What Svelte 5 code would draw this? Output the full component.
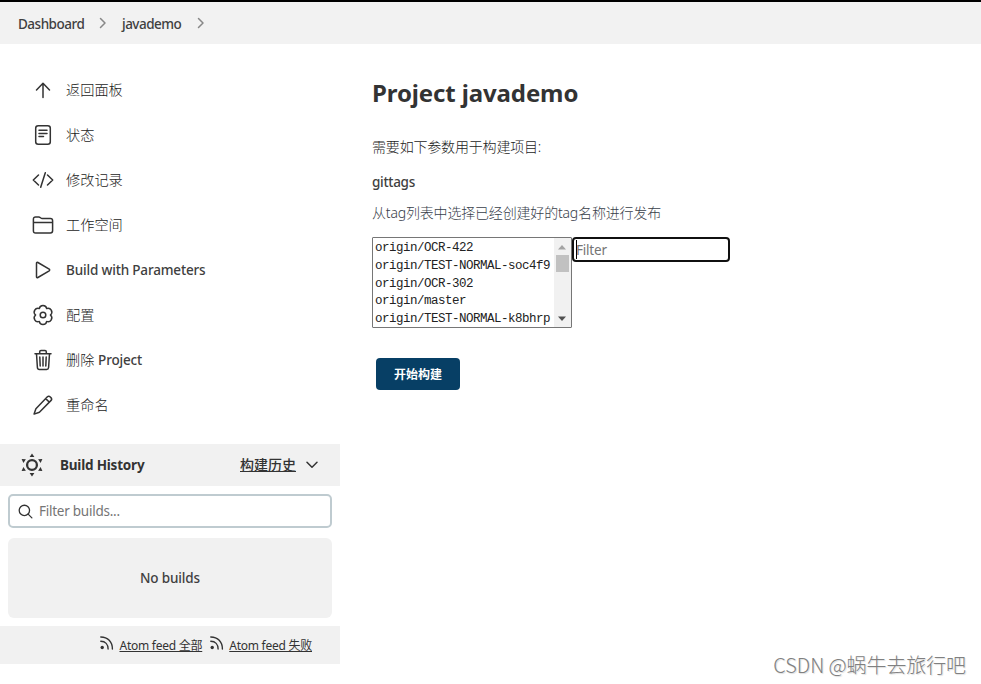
<script>
  const tasks = [
    { label: "返回面板", icon: "up" },
    { label: "状态", icon: "status" },
    { label: "修改记录", icon: "code" },
    { label: "工作空间", icon: "folder" },
    { latin: "Build with Parameters", icon: "play" },
    { label: "配置", icon: "gear" },
    { label: "删除 ", latin: "Project", icon: "trash" },
    { label: "重命名", icon: "pencil" },
  ];

  const tags = [
    "origin/OCR-422",
    "origin/TEST-NORMAL-soc4f9",
    "origin/OCR-302",
    "origin/master",
    "origin/TEST-NORMAL-k8bhrp",
  ];

  const feeds = ["全部", "失败"];
</script>

<div class="page">
  <nav class="breadcrumbs">
    <span class="crumb">Dashboard</span>
    <svg class="chevron" viewBox="0 0 8 12"><path d="M1.5 1.5 6 6l-4.5 4.5" /></svg>
    <span class="crumb second">javademo</span>
    <svg class="chevron" viewBox="0 0 8 12"><path d="M1.5 1.5 6 6l-4.5 4.5" /></svg>
  </nav>

  <div class="body">
    <aside>
      <div class="tasks">
        {#each tasks as task}
          <div class="task">
            <svg class="icon" viewBox="0 0 24 24">
              {#if task.icon === "up"}
                <path d="M12 19.500V5.500M5.500 12 12 5.200l6.500 6.800" />
              {:else if task.icon === "status"}
                <rect x="4.700" y="2.700" width="14.600" height="18.600" rx="2.500" />
                <path d="M8 7.200h8M8 10.400h8M8 13.600h4.500" />
              {:else if task.icon === "code"}
                <path d="M7.500 7 2.300 12l5.200 5M16.500 7l5.200 5-5.200 5M14.300 4.800 9.700 19.200" />
              {:else if task.icon === "folder"}
                <path
                  d="M2.400 9.500V6.200c0-1.400.8-2.200 2.200-2.200h3.200c1.500 0 1.900 1.500 3.300 1.500h8.300c1.400 0 2.200.8 2.200 2.200v10.100c0 1.400-.8 2.200-2.200 2.200H4.600c-1.400 0-2.200-.8-2.200-2.200V9.500h19.200"
                />
              {:else if task.icon === "play"}
                <path d="M5.500 5.300v13.400c0 .9.700 1.200 1.400.8l11.300-6.700c.6-.4.600-1.200 0-1.600L6.900 4.500c-.7-.4-1.400-.1-1.400.8Z" />
              {:else if task.icon === "gear"}
                <circle cx="12" cy="12" r="2.800" />
                <path
                  d="M8.300 5.600a3.750 3.750 0 0 1 7.400 0 3.750 3.750 0 0 1 3.700 6.400 3.750 3.750 0 0 1-3.700 6.400 3.750 3.750 0 0 1-7.400 0A3.750 3.750 0 0 1 4.600 12a3.750 3.750 0 0 1 3.700-6.400Z"
                />
              {:else if task.icon === "trash"}
                <path d="M4 5.700h16M8.700 5.500V3.800c0-.8.5-1.300 1.300-1.300h4c.8 0 1.300.5 1.300 1.300v1.700" />
                <path d="m5.500 5.800.9 13.700c.1 1.200.8 1.900 2 1.900h7.200c1.200 0 1.900-.7 2-1.900l.9-13.700M8.800 9l.4 9M12 9v9M15.200 9l-.4 9" />
              {:else}
                <path d="M16.400 3.800c1.800-1.800 5.500 1.600 3.700 3.600L8.400 19.200l-5.300 1.900 1.800-5.400L16.400 3.800ZM14.700 5.600l3.700 3.700" />
              {/if}
            </svg>
            <span>{task.label ?? ""}<span class="latin">{task.latin ?? ""}</span></span>
          </div>
        {/each}
      </div>

      <div class="history">
        <svg class="weather" viewBox="0 0 24 24">
          <circle cx="12" cy="12" r="4.900" />
          <path
            d="m12 .4 2.400 3.600H9.600ZM12 23.600 9.600 20h4.800ZM1.600 6l4.300.3-2.500 3.700ZM22.400 6l-4.300.3 2.500 3.700ZM1.600 18l4.300-.3-2.500-3.700ZM22.400 18l-4.300-.3 2.500-3.700Z"
          />
        </svg>
        <strong>Build History</strong>
        <span class="trend">构建历史</span>
        <svg class="down" viewBox="0 0 12 8"><path d="m1 1.300 5 5 5-5" /></svg>
      </div>

      <div class="search">
        <svg viewBox="0 0 16 16"><circle cx="6.800" cy="6.800" r="5.500" /><path d="m10.800 10.800 4 4" /></svg>
        <span>Filter builds...</span>
      </div>

      <div class="empty">No builds</div>

      <div class="feeds">
        {#each feeds as feed}
          <div class="feed">
            <svg viewBox="0 0 14 14">
              <circle cx="2.200" cy="11.500" r="1.700" />
              <path d="M.8 5.300c4.500 0 7.300 3 7.300 7.700M.8 1c7 0 11.600 4.800 11.600 12" />
            </svg>
            <span>Atom feed {feed}</span>
          </div>
        {/each}
      </div>
    </aside>

    <main>
      <h1>Project javademo</h1>
      <p class="intro">需要如下参数用于构建项目:</p>
      <p class="name">gittags</p>
      <p class="description">从tag列表中选择已经创建好的tag名称进行发布</p>
      <div class="parameter">
        <div class="list">
          <div class="options">
            {#each tags as tag}
              <div class="option">{tag}</div>
            {/each}
          </div>
          <div class="scrollbar">
            <svg viewBox="0 0 16 17"><path fill="#a3a3a3" d="m8 7 4 4.500H4Z" /></svg>
            <div class="thumb"></div>
            <svg class="bottom" viewBox="0 0 16 17"><path fill="#505050" d="m8 11 4-4.500H4Z" /></svg>
          </div>
        </div>
        <div class="filter"><i></i><span>Filter</span></div>
      </div>
      <button>开始构建</button>
    </main>
  </div>

  <div class="watermark">CSDN @蜗牛去旅行吧</div>
</div>

<style>
  :global(body) {
    margin: 0;
    background: #fff;
  }

  .page {
    position: relative;
    box-sizing: border-box;
    width: 981px;
    height: 684px;
    overflow: hidden;
    border-top: 2px solid #000;
    color: #333;
    font: 500 13.5px/20px "Noto Sans", "Noto Sans CJK SC", sans-serif;
    white-space: nowrap;
  }

  svg {
    display: block;
    flex: none;
    fill: none;
    stroke: #333;
    stroke-width: 1.5;
    stroke-linecap: round;
    stroke-linejoin: round;
  }

  .breadcrumbs {
    display: flex;
    align-items: center;
    height: 42px;
    padding-left: 18px;
    background: #f2f2f2;
  }

  .crumb {
    width: 67px;
    padding-top: 2px;
    color: #404040;
    letter-spacing: -0.5px;
  }

  .second {
    width: 61px;
  }

  .chevron {
    width: 8px;
    height: 12px;
    margin: 0 15px 0 14px;
    stroke: #888;
  }

  .body {
    display: flex;
  }

  aside {
    width: 340px;
  }

  .tasks {
    padding: 23px 0 17px 31px;
  }

  .task {
    display: flex;
    align-items: center;
    gap: 11px;
    height: 45px;
    color: #1c1c1c;
    font-weight: 300;
    font-size: 14.2px;
  }

  .latin {
    color: #404040;
    font-weight: 500;
    font-size: 13.5px;
    letter-spacing: -0.17px;
  }

  .icon {
    width: 24px;
    height: 24px;
  }

  .history {
    display: flex;
    align-items: center;
    box-sizing: border-box;
    height: 42px;
    padding: 0 22px 1px 20px;
    background: #f1f1f1;
  }

  .weather {
    width: 24px;
    height: 24px;
    margin-right: 16px;
    stroke-width: 2.3;
  }

  .weather path {
    fill: #333;
    stroke: none;
  }

  strong {
    flex: 1;
    font-weight: 700;
    letter-spacing: -0.2px;
  }

  .trend {
    font-size: 14px;
    text-decoration: underline;
  }

  .down {
    width: 12px;
    height: 8px;
    margin-left: 10px;
  }

  .search {
    display: flex;
    align-items: center;
    box-sizing: border-box;
    height: 34px;
    margin: 8px 8px 10px;
    padding-left: 8px;
    border: 2px solid #bfcbd0;
    border-radius: 5px;
    color: #757575;
    font-weight: 400;
    letter-spacing: -0.25px;
  }

  .search svg {
    width: 15px;
    height: 15px;
    margin-right: 6px;
    stroke-width: 1.4;
  }

  .empty {
    display: flex;
    align-items: center;
    justify-content: center;
    height: 80px;
    margin: 0 8px 8px;
    border-radius: 6px;
    background: #f1f1f1;
    color: #404040;
    letter-spacing: -0.15px;
  }

  .feeds {
    display: flex;
    align-items: center;
    justify-content: flex-end;
    gap: 8px;
    box-sizing: border-box;
    height: 38px;
    padding: 1px 28px 0 0;
    background: #f1f1f1;
    font-size: 12px;
    font-weight: 400;
    letter-spacing: -0.25px;
  }

  .feed {
    display: flex;
    gap: 5px;
    text-decoration: underline;
  }

  .feed svg {
    width: 14px;
    height: 14px;
    stroke-width: 1.4;
  }

  .feed circle {
    fill: #333;
    stroke: none;
  }

  main {
    padding: 33px 0 0 32px;
  }

  h1 {
    margin: 0;
    font-size: 24px;
    font-weight: 700;
    line-height: 32px;
    letter-spacing: -0.12px;
  }

  p {
    margin: 0;
    color: #1c1c1c;
    font-size: 14px;
    font-weight: 300;
    letter-spacing: -0.18px;
  }

  .intro {
    margin-top: 28px;
  }

  .name {
    margin-top: 15px;
    color: #404040;
    font-size: 13.5px;
    font-weight: 500;
    letter-spacing: -0.3px;
  }

  .description {
    margin-top: 11px;
    color: #38404a;
  }

  .parameter {
    display: flex;
    align-items: flex-start;
    margin-top: 14px;
  }

  .list {
    display: flex;
    box-sizing: border-box;
    width: 200px;
    height: 91px;
    border: 1px solid #767676;
    border-radius: 1px;
  }

  .options {
    flex: 1;
    padding-left: 2px;
    overflow: hidden;
  }

  .option {
    height: 17.8px;
    color: #222;
    font: 400 12.5px/20px "Liberation Mono", monospace;
    letter-spacing: -0.5px;
  }

  .scrollbar {
    display: flex;
    flex-direction: column;
    width: 17px;
    background: #f1f1f1;
  }

  .scrollbar svg {
    width: 16px;
    height: 17px;
    stroke: none;
  }

  .thumb {
    width: 13px;
    height: 17px;
    margin-left: 2px;
    background: #c1c1c1;
  }

  .bottom {
    margin-top: auto;
  }

  .filter {
    display: flex;
    align-items: center;
    box-sizing: border-box;
    width: 158px;
    height: 25px;
    border: 2px solid #101010;
    border-radius: 4px;
    color: #757575;
    font-weight: 400;
    letter-spacing: -0.2px;
  }

  .filter i {
    width: 1px;
    height: 19px;
    margin: 0 -1px 0 2px;
    background: #000;
  }

  button {
    display: block;
    width: 84px;
    height: 32px;
    margin: 30px 0 0 4px;
    padding: 1px 0 0;
    border: 0;
    border-radius: 4px;
    background: #073f65;
    color: #fff;
    font: 700 12px/31px "Noto Sans", "Noto Sans CJK SC", sans-serif;
  }

  .watermark {
    position: absolute;
    right: 15px;
    bottom: 6px;
    color: #808080;
    font: 300 20px/26px "Noto Sans CJK SC", sans-serif;
    letter-spacing: -0.1px;
    text-shadow: 1px 1px 1px #ddd;
  }
</style>
